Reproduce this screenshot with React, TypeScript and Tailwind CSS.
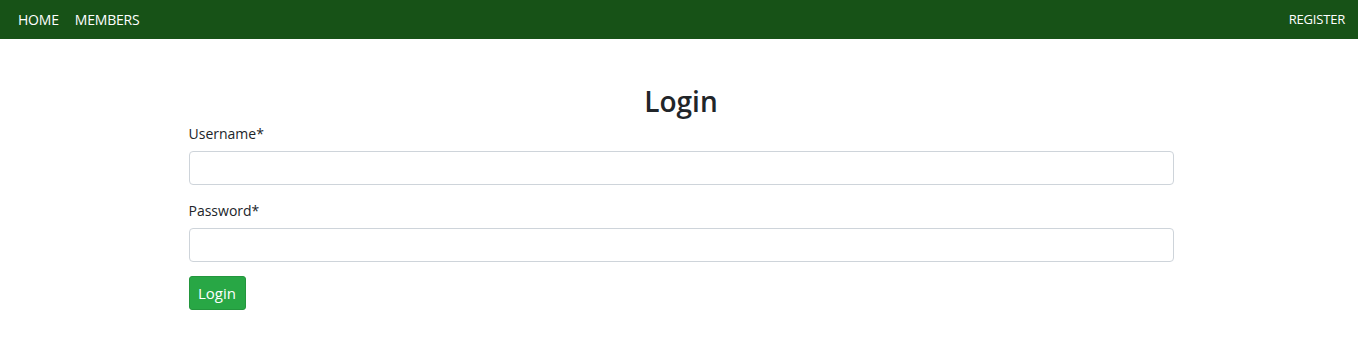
export default function App() {
  return (
    <div className="min-h-screen bg-white text-[#212529]" style={{ fontFamily: '"Open Sans", "Noto Sans", sans-serif' }}>
      <nav className="flex h-[39px] items-center justify-between bg-[#175217] px-[18px] text-[14px] text-white">
        <div className="flex items-center gap-[16px] tracking-[-0.2px]">
          <a>HOME</a>
          <a>MEMBERS</a>
        </div>
        <a className="mr-[-5px] text-[13px] tracking-[-0.2px]">REGISTER</a>
      </nav>

      <div className="mx-auto w-[985px] translate-x-[2px] pt-[45px]">
        <h1 className="text-center text-[28px] font-semibold leading-[34px]">Login</h1>
        <form className="mt-[6px]">
          <label className="block text-[14px] leading-[20px]">Username*</label>
          <input className="mt-[7px] block h-[34px] w-full rounded-[4px] border border-[#ced4da]" />
          <label className="mt-[16px] block text-[14px] leading-[20px]">Password*</label>
          <input className="mt-[7px] block h-[34px] w-full rounded-[4px] border border-[#ced4da]" />
          <button
            type="button"
            className="mt-[14px] h-[34px] w-[57px] rounded-[3px] border border-[#23963d] bg-[#28a745] text-[15px] text-white"
          >
            Login
          </button>
        </form>
      </div>
    </div>
  )
}
